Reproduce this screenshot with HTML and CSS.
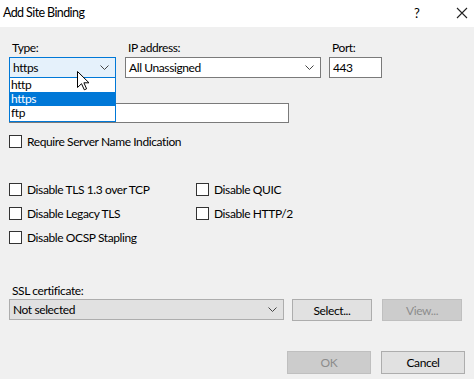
FILE: index.html
```html
<!DOCTYPE html>
<html>
<head>
<meta charset="utf-8">
<link rel="stylesheet" href="styles.css">
</head>
<body>
<div class="dialog">
  <div class="titlebar">
    <span class="title">Add Site Binding</span>
    <span class="tb-help">?</span>
    <span class="tb-close"><svg width="12" height="12" viewBox="0 0 12 12"><path d="M1 1L11 11M11 1L1 11" stroke="#222" stroke-width="1.1" fill="none"/></svg></span>
  </div>
  <div class="content">
    <div class="row1">
      <div class="field f-type">
        <div class="label">Type:</div>
        <div class="combo combo-active"><span>https</span><svg class="chev" width="9" height="5" viewBox="0 0 9 5"><path d="M0.5 0.5L4.5 4.5L8.5 0.5" stroke="#444" fill="none"/></svg></div>
        <div class="droplist">
          <div class="opt">http</div>
          <div class="opt sel">https</div>
          <div class="opt">ftp</div>
        </div>
        <svg class="cursor" width="13" height="20" viewBox="0 0 13 20"><path d="M0.5 0.5L0.5 16.5L4.5 12.7L7.3 18.8L9.6 17.8L6.9 11.8L12 11.8Z" fill="#fff" stroke="#000" stroke-width="1" stroke-linejoin="round"/></svg>
      </div>
      <div class="field f-ip">
        <div class="label">IP address:</div>
        <div class="combo combo-white"><span>All Unassigned</span><svg class="chev" width="9" height="5" viewBox="0 0 9 5"><path d="M0.5 0.5L4.5 4.5L8.5 0.5" stroke="#444" fill="none"/></svg></div>
      </div>
      <div class="field f-port">
        <div class="label">Port:</div>
        <div class="textbox"><span>443</span></div>
      </div>
    </div>
    <div class="host">
      <div class="label hidden-label">Host name:</div>
      <div class="textbox host-box"></div>
    </div>
    <label class="check sni"><span class="box"></span>Require Server Name Indication</label>
    <div class="checks">
      <label class="check"><span class="box"></span>Disable TLS 1.3 over TCP</label>
      <label class="check"><span class="box"></span>Disable QUIC</label>
      <label class="check"><span class="box"></span>Disable Legacy TLS</label>
      <label class="check"><span class="box"></span>Disable HTTP/2</label>
      <label class="check"><span class="box"></span>Disable OCSP Stapling</label>
    </div>
    <div class="label ssl-label">SSL certificate:</div>
    <div class="ssl-row">
      <div class="combo combo-gray"><span>Not selected</span><svg class="chev" width="9" height="5" viewBox="0 0 9 5"><path d="M0.5 0.5L4.5 4.5L8.5 0.5" stroke="#444" fill="none"/></svg></div>
      <div class="btn">Select...</div>
      <div class="btn disabled">View...</div>
    </div>
    <div class="footer">
      <div class="btn disabled ok">OK</div>
      <div class="btn cancel">Cancel</div>
    </div>
  </div>
</div>
</body>
</html>
```

FILE: styles.css
```css
html, body {
  margin: 0;
  padding: 0;
  background: #f0f0f0;
}
body {
  font-family: "Segoe UI", Lato, "Noto Sans", sans-serif;
  font-size: 12px;
  letter-spacing: -0.4px;
  color: #000;
}
.dialog {
  width: 474px;
  height: 379px;
  overflow: hidden;
  background: #f0f0f0;
}
.titlebar {
  height: 27px;
  background: #fff;
  display: flex;
  align-items: center;
}
.title {
  padding-left: 3px;
  font-size: 12.5px;
  letter-spacing: -0.6px;
  flex: 1;
  margin-top: -2px;
}
.tb-help {
  width: 16px;
  font-size: 13px;
  margin-right: 26px;
  margin-top: -2px;
}
.tb-close {
  width: 18px;
  display: flex;
  margin-top: -2px;
}
.content {
  padding: 13px 9px 0 9px;
  position: relative;
}
.label {
  height: 17px;
  line-height: 15px;
  padding-left: 3px;
}
.hidden-label { visibility: hidden; }
.row1 {
  display: flex;
  gap: 9px;
}
.field { position: relative; }
.f-type { width: 107px; }
.f-ip { width: 196px; }
.f-port { width: 53px; margin-left: -1px; }
.combo {
  height: 21px;
  box-sizing: border-box;
  display: flex;
  align-items: center;
  padding-left: 3px;
  padding-right: 6px;
  justify-content: space-between;
}
.combo-active {
  border: 1px solid #0078d7;
  background: #e5f1fb;
}
.combo-white {
  border: 1px solid #7a7a7a;
  background: #fff;
}
.combo-gray {
  border: 1px solid #adadad;
  background: #e1e1e1;
  height: 21px;
  width: 275px;
}
.textbox {
  height: 21px;
  box-sizing: border-box;
  border: 1px solid #7a7a7a;
  background: #fff;
  display: flex;
  align-items: center;
  padding-left: 3px;
}
.droplist {
  position: absolute;
  left: 0;
  top: 38px;
  width: 107px;
  box-sizing: border-box;
  border: 1px solid #0078d7;
  border-top: none;
  background: #fff;
  z-index: 5;
  padding-bottom: 1px;
}
.opt {
  height: 14px;
  line-height: 13px;
  padding-left: 1px;
}
.opt.sel {
  background: #0078d7;
  color: #fff;
}
.cursor {
  position: absolute;
  left: 68px;
  top: 31px;
  z-index: 6;
}
.host {
  margin-top: 10px;
  width: 280px;
}
.host .label { height: 15px; }
.host-box { height: 20px; }
.check {
  display: flex;
  align-items: center;
  height: 14px;
}
.box {
  width: 13px;
  height: 13px;
  box-sizing: border-box;
  border: 1px solid #333;
  background: #fff;
  margin-right: 5px;
  flex: none;
}
.sni { margin-top: 11px; }
.checks {
  margin-top: 34px;
  display: grid;
  grid-template-columns: 187px auto;
  row-gap: 10px;
}
.ssl-label {
  margin-top: 39px;
  height: 16px;
}
.ssl-row {
  display: flex;
  align-items: flex-start;
}
.btn {
  width: 80px;
  height: 22px;
  box-sizing: border-box;
  border: 1px solid #adadad;
  background: #e1e1e1;
  display: flex;
  align-items: center;
  justify-content: center;
}
.ssl-row .btn { margin-left: 8px; }
.ssl-row .btn.disabled { margin-left: 10px; }
.btn.disabled {
  background: #cccccc;
  border-color: #bfbfbf;
  color: #8c8c8c;
}
.footer {
  display: flex;
  justify-content: flex-end;
  gap: 10px;
  margin-top: 30px;
  padding-right: 0;
}
.footer .btn { width: 84px; height: 23px; }
```
